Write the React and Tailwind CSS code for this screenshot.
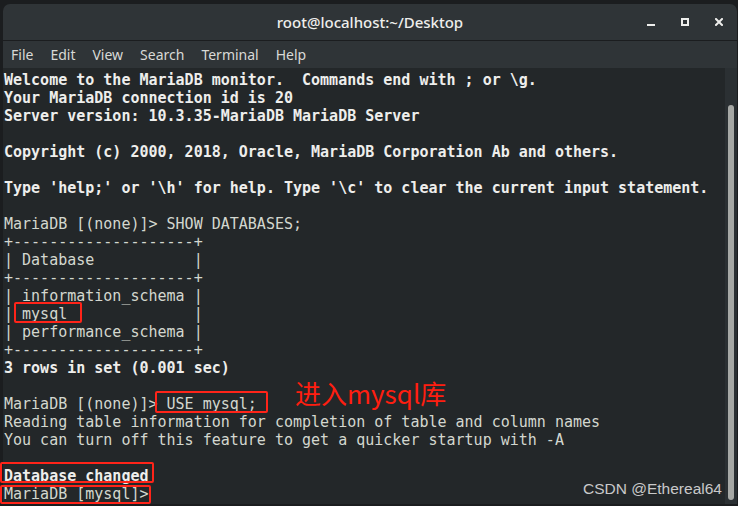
const LINES = [
  ['Welcome to the MariaDB monitor.  Commands end with ; or \\g.', true],
  ['Your MariaDB connection id is 20', true],
  ['Server version: 10.3.35-MariaDB MariaDB Server', true],
  [''],
  ['Copyright (c) 2000, 2018, Oracle, MariaDB Corporation Ab and others.', true],
  [''],
  ["Type 'help;' or '\\h' for help. Type '\\c' to clear the current input statement.", true],
  [''],
  ['MariaDB [(none)]> SHOW DATABASES;'],
  ['+--------------------+'],
  ['| Database           |'],
  ['+--------------------+'],
  ['| information_schema |'],
  ['| mysql              |'],
  ['| performance_schema |'],
  ['+--------------------+'],
  ['3 rows in set (0.001 sec)', true],
  [''],
  ['MariaDB [(none)]> USE mysql;'],
  ['Reading table information for completion of table and column names'],
  ['You can turn off this feature to get a quicker startup with -A'],
  [''],
  ['Database changed', true],
  ['MariaDB [mysql]>'],
];

const MENU = ['File', 'Edit', 'View', 'Search', 'Terminal', 'Help'];

function TitleBar() {
  return (
    <div className="relative flex h-[36px] items-center justify-center rounded-t-[7px] bg-[#2f3437]">
      <span className="text-[15px] font-medium text-[#eeeeec]" style={{ fontFamily: '"Noto Sans", sans-serif' }}>
        root@localhost:~/Desktop
      </span>
      <div className="absolute right-[14px] top-[14px] flex items-start gap-[26px]">
        <svg width="8" height="8" viewBox="0 0 8 8">
          <rect x="0" y="6" width="8" height="2" fill="#eeeeec" />
        </svg>
        <svg width="8" height="8" viewBox="0 0 8 8">
          <rect x="1" y="1" width="6" height="6" fill="none" stroke="#eeeeec" strokeWidth="2" />
        </svg>
        <svg width="8" height="8" viewBox="0 0 8 8">
          <path d="M1 1 L7 7 M7 1 L1 7" stroke="#eeeeec" strokeWidth="2" strokeLinecap="square" />
        </svg>
      </div>
    </div>
  );
}

function MenuBar() {
  return (
    <div
      className="flex h-[28px] items-center gap-[17px] border-t border-[#1b1d1f] bg-[#2f3437] pl-[8px] text-[14px] text-[#d8d9d6]"
      style={{ fontFamily: '"Noto Sans", sans-serif' }}
    >
      {MENU.map((item) => (
        <span key={item}>{item}</span>
      ))}
    </div>
  );
}

export default function App() {
  return (
    <div className="relative h-[506px] w-[738px] overflow-hidden bg-[#1b1d1f] pb-[2px] pl-[3px] pr-[1px] pt-[4px]">
      <div className="flex h-full flex-col">
        <TitleBar />
        <MenuBar />
        <div className="flex min-h-0 flex-1 bg-[#232729]">
          <div
            className="flex-1 pl-[1px] pt-[3px] text-[15px] leading-[18px]"
            style={{ fontFamily: '"DejaVu Sans Mono", monospace' }}
          >
            {LINES.map(([text, bold], i) => (
              <div
                key={i}
                className={`h-[18px] whitespace-pre ${bold ? 'font-bold text-[#eeeeec]' : 'text-[#d3d7cf]'}`}
              >
                {text}
              </div>
            ))}
          </div>
          <div className="flex w-[12px] justify-center bg-[#2b3033] pb-[4px] pt-[37px]">
            <div className="w-[6px] rounded-full bg-[#a6a8a5]" />
          </div>
        </div>
      </div>

      {/* annotations */}
      <div className="absolute left-[14px] top-[302px] h-[21px] w-[68px] rounded-[2px] border-2 border-[#ff2419]" />
      <div className="absolute left-[155px] top-[391px] h-[22px] w-[113px] rounded-[2px] border-2 border-[#ff2419]" />
      <div className="absolute left-0 top-[462px] h-[21px] w-[154px] rounded-[2px] border-2 border-[#ff2419]" />
      <div className="absolute left-0 top-[485px] h-[19px] w-[151px] rounded-[2px] border-2 border-[#ff2419]" />
      <div
        className="absolute left-[295px] top-[377px] text-[26px] leading-[32px] text-[#ff1e10]"
        style={{ fontFamily: '"Noto Sans CJK SC", sans-serif' }}
      >
        进入mysql库
      </div>
      <div
        className="absolute left-[583px] top-[479px] text-[15.5px] leading-[20px] text-[#c9c9c9]"
        style={{ fontFamily: '"Liberation Sans", Arial, sans-serif' }}
      >
        CSDN @Ethereal64
      </div>
    </div>
  );
}
